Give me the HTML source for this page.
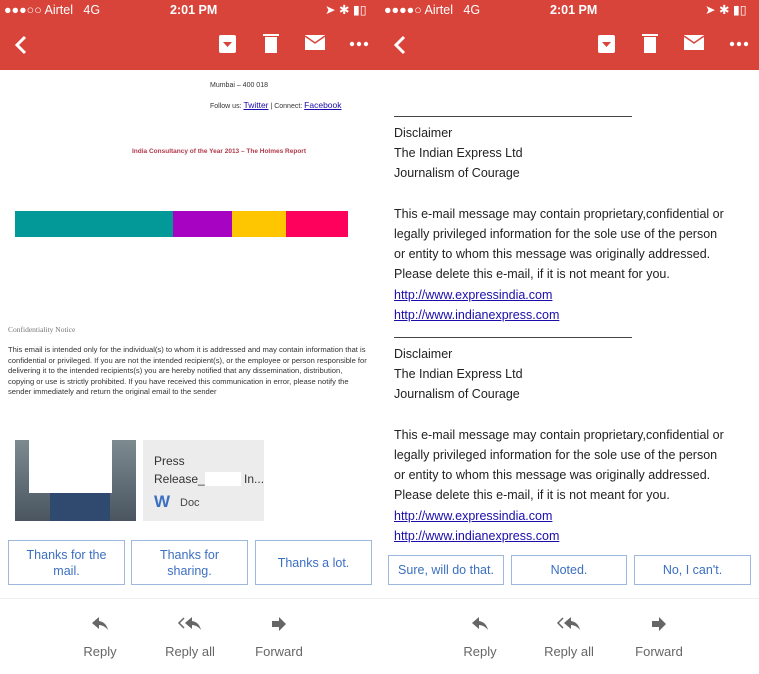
<!DOCTYPE html>
<html><head><meta charset="utf-8"><style>
*{margin:0;padding:0;box-sizing:border-box}
body{width:759px;height:674px;overflow:hidden;background:#fff;font-family:"Liberation Sans",sans-serif;position:relative}
.a{position:absolute}
.hdr{top:0;height:70px;background:#d9443a}
.st{color:#fff;font-size:12.5px}
.rt{font-size:12.5px;color:#222;left:394px}
.lnk{color:#1a0dab;text-decoration:underline}
.btn{border:1px solid #9db7dd;color:#3b6fc0;font-size:12.5px;text-align:center;display:flex;align-items:center;justify-content:center;line-height:16px;background:#fff}
.lab{font-size:13px;color:#666;text-align:center;width:80px}
</style></head><body>
<div class="a hdr" style="left:0;width:759px"></div>
<div class="a st" style="left:4px;top:3px">●●●○○ Airtel &nbsp; 4G</div>
<div class="a st" style="left:170px;top:3px;font-weight:bold">2:01 PM</div>
<div class="a st" style="left:325px;top:2px">➤ ✱ ▮▯</div>
<div class="a st" style="left:384px;top:3px">●●●●○ Airtel &nbsp; 4G</div>
<div class="a st" style="left:550px;top:3px;font-weight:bold">2:01 PM</div>
<div class="a st" style="left:705px;top:2px">➤ ✱ ▮▯</div>
<svg class="a" style="left:0;top:30px" width="759" height="30">
<g fill="none" stroke="#fff" stroke-width="3"><path d="M25 7 L17 15 L25 23"/><path d="M404 7 L396 15 L404 23"/></g>
<g fill="#fff">
<rect x="219" y="5" width="17" height="18" rx="2"/><rect x="265" y="7" width="12" height="16"/><rect x="263" y="4" width="16" height="2"/><rect x="305" y="5" width="20" height="15"/>
<circle cx="352" cy="14" r="2.2"/><circle cx="359" cy="14" r="2.2"/><circle cx="366" cy="14" r="2.2"/>
<rect x="598" y="5" width="17" height="18" rx="2"/><rect x="644" y="7" width="12" height="16"/><rect x="642" y="4" width="16" height="2"/><rect x="684" y="5" width="20" height="15"/>
<circle cx="732" cy="14" r="2.2"/><circle cx="739" cy="14" r="2.2"/><circle cx="746" cy="14" r="2.2"/></g>
<g fill="#d9443a"><path d="M223 12h9l-4.5 5z"/><path d="M602 12h9l-4.5 5z"/></g>
<g fill="none" stroke="#d9443a" stroke-width="1.5"><path d="M305 6l10 7 10-7"/><path d="M684 6l10 7 10-7"/></g>
</svg>
<div class="a" style="left:210px;top:82px;font-size:7px;color:#333">Mumbai – 400 018</div>
<div class="a" style="left:210px;top:100px;font-size:7px;color:#333">Follow us: <span class="lnk" style="font-size:8.5px">Twitter</span> | Connect: <span class="lnk" style="font-size:8.5px">Facebook</span></div>
<div class="a" style="left:132px;top:148px;font-size:6.5px;color:#b03a4a;font-weight:bold">India Consultancy of the Year 2013 – The Holmes Report</div>
<div class="a" style="left:15px;top:211px;width:158px;height:26px;background:#039999"></div>
<div class="a" style="left:173px;top:211px;width:59px;height:26px;background:#a703c2"></div>
<div class="a" style="left:232px;top:211px;width:54px;height:26px;background:#fec601"></div>
<div class="a" style="left:286px;top:211px;width:62px;height:26px;background:#fe015c"></div>
<div class="a" style="left:8px;top:325px;font-size:7.5px;color:#777;font-family:'Liberation Serif',serif">Confidentiality Notice</div>
<div class="a" style="left:8px;top:345px;width:362px;font-size:7.6px;line-height:10.6px;color:#333">This email is intended only for the individual(s) to whom it is addressed and may contain information that is confidential or privileged. If you are not the intended recipient(s), or the employee or person responsible for delivering it to the intended recipients(s) you are hereby notified that any dissemination, distribution, copying or use is strictly prohibited. If you have received this communication in error, please notify the sender immediately and return the original email to the sender</div>
<div class="a" style="left:15px;top:440px;width:121px;height:81px;background:linear-gradient(#7d8a90,#4a5560)"></div>
<div class="a" style="left:50px;top:490px;width:60px;height:31px;background:#2f4a6e"></div>
<div class="a" style="left:29px;top:440px;width:83px;height:53px;background:#fff"></div>
<div class="a" style="left:143px;top:440px;width:121px;height:81px;background:#ececec"></div>
<div class="a" style="left:154px;top:452px;font-size:12px;color:#333;line-height:18px">Press<br>Release_<span style="background:#fff;color:#fff">xxxxxx</span> In...</div>
<div class="a" style="left:154px;top:492px;font-size:17px;color:#3b6fc0;font-weight:bold">W</div>
<div class="a" style="left:180px;top:497px;font-size:11px;color:#444">Doc</div>
<div class="a" style="left:394px;top:116px;width:238px;border-top:1px solid #444"></div>
<div class="a rt" style="top:123px;line-height:20.2px">Disclaimer<br>The Indian Express Ltd<br>Journalism of Courage<br><br>This e-mail message may contain proprietary,confidential or<br>legally privileged information for the sole use of the person<br>or entity to whom this message was originally addressed.<br>Please delete this e-mail, if it is not meant for you.<br><span class="lnk">http://www.expressindia.com</span><br><span class="lnk">http://www.indianexpress.com</span></div>
<div class="a" style="left:394px;top:337px;width:238px;border-top:1px solid #444"></div>
<div class="a rt" style="top:344px;line-height:20.2px">Disclaimer<br>The Indian Express Ltd<br>Journalism of Courage<br><br>This e-mail message may contain proprietary,confidential or<br>legally privileged information for the sole use of the person<br>or entity to whom this message was originally addressed.<br>Please delete this e-mail, if it is not meant for you.<br><span class="lnk">http://www.expressindia.com</span><br><span class="lnk">http://www.indianexpress.com</span></div>
<div class="a btn" style="left:8px;top:540px;width:117px;height:45px">Thanks for the<br>mail.</div>
<div class="a btn" style="left:131px;top:540px;width:117px;height:45px">Thanks for<br>sharing.</div>
<div class="a btn" style="left:255px;top:540px;width:117px;height:45px">Thanks a lot.</div>
<div class="a btn" style="left:388px;top:555px;width:116px;height:30px">Sure, will do that.</div>
<div class="a btn" style="left:511px;top:555px;width:116px;height:30px">Noted.</div>
<div class="a btn" style="left:634px;top:555px;width:117px;height:30px">No, I can't.</div>
<div class="a" style="left:0;top:598px;width:759px;border-top:1px solid #eee"></div>
<svg class="a" style="left:0;top:615px" width="759" height="22">
<g fill="#666">
<path d="M92 8 L99 2 L99 6 Q106 7 108 15 Q104 10 99 10 L99 14 Z"/>
<path d="M185 8 L192 2 L192 6 Q199 7 201 15 Q197 10 192 10 L192 14 Z"/>
<path d="M272 6 h7 v-4 l7 7 -7 7 v-4 h-7 z"/>
<path d="M472 8 L479 2 L479 6 Q486 7 488 15 Q484 10 479 10 L479 14 Z"/>
<path d="M564 8 L571 2 L571 6 Q578 7 580 15 Q576 10 571 10 L571 14 Z"/>
<path d="M652 6 h7 v-4 l7 7 -7 7 v-4 h-7 z"/>
</g>
<g fill="none" stroke="#666" stroke-width="1.5"><path d="M184 3 L179 8 L184 13"/><path d="M563 3 L558 8 L563 13"/></g>
</svg>
<div class="a lab" style="left:60px;top:644px">Reply</div>
<div class="a lab" style="left:150px;top:644px">Reply all</div>
<div class="a lab" style="left:239px;top:644px">Forward</div>
<div class="a lab" style="left:440px;top:644px">Reply</div>
<div class="a lab" style="left:529px;top:644px">Reply all</div>
<div class="a lab" style="left:619px;top:644px">Forward</div>
</body></html>
